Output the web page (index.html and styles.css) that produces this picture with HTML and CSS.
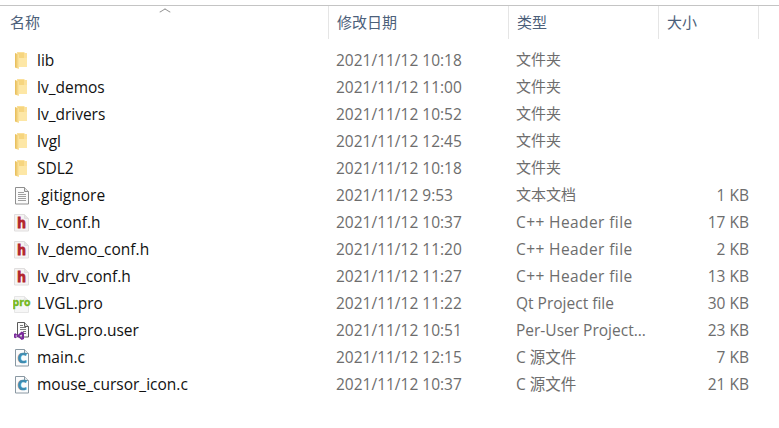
FILE: index.html
```html
<!DOCTYPE html>
<html>
<head>
    <meta charset="utf-8">
    <link rel="stylesheet" href="styles.css">
</head>
<body>
    <svg width="0" height="0" class="defs">
        <defs>
            <linearGradient id="folderStrip" x1="0" y1="0" x2="1" y2="0">
                <stop offset="0" stop-color="#e6bb55"/>
                <stop offset="1" stop-color="#fde6a2"/>
            </linearGradient>
            <symbol id="folder" viewBox="0 0 18 18">
                <path d="M4 0h7l1 1h2v14H4z" fill="#fbe09a"/>
                <path d="M5 1h6v13H5z" fill="#f6d57f"/>
                <path d="M2 1l4 1.500V17l-4-1.500z" fill="url(#folderStrip)"/>
                <path d="M6 6h8v9H6z" fill="#fde7a6"/>
            </symbol>
            <symbol id="text" viewBox="0 0 18 18">
                <path d="M2.500 .5h9l4 4v12.500h-13z" fill="#fbfbfb" stroke="#8f8f8f"/>
                <path d="M11.500 .5v4h4" fill="#e4e4e4" stroke="#8f8f8f"/>
                <path d="M5 5.500h6M5 7.500h8M5 9.500h8M5 11.500h8M5 13.500h8" stroke="#a0a0a0"/>
            </symbol>
            <symbol id="header" viewBox="0 0 18 18">
                <path d="M1.500 .5h10l4 4v12.500h-14z" fill="#f5f3f3" stroke="#e0dede"/>
                <path d="M11.500 .5v4h4" fill="#e6e4e4" stroke="#e0dede"/>
                <text x="8.500" y="13.500" class="glyph-h">h</text>
            </symbol>
            <symbol id="pro" viewBox="0 0 18 18">
                <path d="M1.500 1.500h10l4 4v12h-14z" fill="#f6f6f6" stroke="#e6e6e6"/>
                <path d="M11.500 1.500v4h4" fill="#e8e8e8" stroke="#e6e6e6"/>
                <text x="8.500" y="11" class="glyph-pro">pro</text>
            </symbol>
            <symbol id="user" viewBox="0 0 18 18">
                <path d="M4.500 .5h7l4 4v10.500h-11z" fill="#fafafa" stroke="#5a5a5a"/>
                <path d="M11.500 .5v4h4" fill="#dcdcdc" stroke="#5a5a5a"/>
                <path d="M7 3.500h3M7 5.500h6M7 7.500h6M10 9.500h3M10 11.500h3" stroke="#7a7a7a"/>
                <path d="M1 12l1.500-.8 2.200 1.700 4-3.400 2.300 1v6.400l-2.300 1-4-3.400-2.200 1.700-1.500-.8zM2.800 12.900v2.200l1.300-1.100zM8.800 12.400l-2.400 1.700 2.400 1.700z" fill="#7a2a9c" fill-rule="evenodd"/>
            </symbol>
            <symbol id="csource" viewBox="0 0 18 18">
                <path d="M2.500 .5h9l4 4v12.500h-13z" fill="#fbfcfd" stroke="#8a98a2"/>
                <path d="M11.500 .5v4h4" fill="#e4e8ea" stroke="#8a98a2"/>
                <text x="9" y="14" class="glyph-c">C</text>
            </symbol>
        </defs>
    </svg>

    <div class="header">
        <span class="sort-arrow"></span>
        <div class="col col-name">名称</div>
        <div class="col col-date">修改日期</div>
        <div class="col col-type">类型</div>
        <div class="col col-size">大小</div>
    </div>

    <div class="list">
        <div class="row"><svg class="icon"><use href="#folder"/></svg><span class="name">lib</span><span class="date">2021/11/12 10:18</span><span class="type zh">文件夹</span><span class="size"></span></div>
        <div class="row"><svg class="icon"><use href="#folder"/></svg><span class="name">lv_demos</span><span class="date">2021/11/12 11:00</span><span class="type zh">文件夹</span><span class="size"></span></div>
        <div class="row"><svg class="icon"><use href="#folder"/></svg><span class="name">lv_drivers</span><span class="date">2021/11/12 10:52</span><span class="type zh">文件夹</span><span class="size"></span></div>
        <div class="row"><svg class="icon"><use href="#folder"/></svg><span class="name">lvgl</span><span class="date">2021/11/12 12:45</span><span class="type zh">文件夹</span><span class="size"></span></div>
        <div class="row"><svg class="icon"><use href="#folder"/></svg><span class="name">SDL2</span><span class="date">2021/11/12 10:18</span><span class="type zh">文件夹</span><span class="size"></span></div>
        <div class="row"><svg class="icon"><use href="#text"/></svg><span class="name">.gitignore</span><span class="date">2021/11/12 9:53</span><span class="type zh">文本文档</span><span class="size">1 KB</span></div>
        <div class="row"><svg class="icon"><use href="#header"/></svg><span class="name">lv_conf.h</span><span class="date">2021/11/12 10:37</span><span class="type wide">C++ Header file</span><span class="size">17 KB</span></div>
        <div class="row"><svg class="icon"><use href="#header"/></svg><span class="name">lv_demo_conf.h</span><span class="date">2021/11/12 11:20</span><span class="type wide">C++ Header file</span><span class="size">2 KB</span></div>
        <div class="row"><svg class="icon"><use href="#header"/></svg><span class="name">lv_drv_conf.h</span><span class="date">2021/11/12 11:27</span><span class="type wide">C++ Header file</span><span class="size">13 KB</span></div>
        <div class="row"><svg class="icon"><use href="#pro"/></svg><span class="name">LVGL.pro</span><span class="date">2021/11/12 11:22</span><span class="type">Qt Project file</span><span class="size">30 KB</span></div>
        <div class="row"><svg class="icon"><use href="#user"/></svg><span class="name">LVGL.pro.user</span><span class="date">2021/11/12 10:51</span><span class="type">Per-User Project...</span><span class="size">23 KB</span></div>
        <div class="row"><svg class="icon"><use href="#csource"/></svg><span class="name">main.c</span><span class="date">2021/11/12 12:15</span><span class="type">C 源文件</span><span class="size">7 KB</span></div>
        <div class="row"><svg class="icon"><use href="#csource"/></svg><span class="name">mouse_cursor_icon.c</span><span class="date">2021/11/12 10:37</span><span class="type">C 源文件</span><span class="size">21 KB</span></div>
    </div>
</body>
</html>
```

FILE: styles.css
```css
body {
    margin: 0;
    background: white;
    font-family: "Open Sans", "Noto Sans CJK SC", sans-serif;
    font-size: 15.5px;
    color: #6d6d6d;
    overflow: hidden;
}

.defs {
    display: block;
    height: 0;
}

.header {
    position: relative;
    display: flex;
    height: 33px;
    margin-top: 5px;
    border-top: 1px solid #c4c4c4;
    color: #4c607a;
    font-size: 15px;
}

.sort-arrow {
    position: absolute;
    left: 161px;
    top: 2px;
    width: 7px;
    height: 7px;
    border-top: 1px solid #8a8a8a;
    border-left: 1px solid #8a8a8a;
    transform: scaleY(0.6) rotate(45deg);
}

.col {
    box-sizing: border-box;
    padding-left: 8px;
    line-height: 33px;
    border-right: 1px solid #e5e5e5;
}

.col-name {
    width: 329px;
    padding-left: 10px;
}

.col-date {
    width: 180px;
}

.col-type {
    width: 150px;
}

.col-size {
    width: 100px;
}

.list {
    padding-top: 8px;
}

.row {
    display: flex;
    align-items: center;
    height: 27px;
    line-height: 27px;
}

.icon {
    width: 18px;
    height: 18px;
    margin-left: 13px;
    flex: none;
}

.name {
    width: 299px;
    margin-left: 6px;
    color: #111;
}

.date {
    width: 180px;
}

.type {
    width: 150px;
    white-space: nowrap;
}

.type.zh {
    font-size: 15px;
    line-height: 25px;
    height: 27px;
}

.type.wide {
    letter-spacing: 0.4px;
}

.size {
    width: 83px;
    text-align: right;
}

.glyph-h {
    font-family: "Liberation Sans", sans-serif;
    font-size: 14px;
    font-weight: bold;
    fill: #b3242e;
    stroke: #b3242e;
    stroke-width: 0.9px;
    text-anchor: middle;
}

.glyph-pro {
    font-family: "Open Sans", sans-serif;
    font-size: 10.5px;
    font-weight: bold;
    fill: #74b81c;
    stroke: #74b81c;
    stroke-width: 0.4px;
    text-anchor: middle;
}

.glyph-c {
    font-family: "Open Sans", sans-serif;
    font-size: 15px;
    font-weight: bold;
    fill: #3d8cb0;
    stroke: #3d8cb0;
    stroke-width: 0.7px;
    text-anchor: middle;
}
```
